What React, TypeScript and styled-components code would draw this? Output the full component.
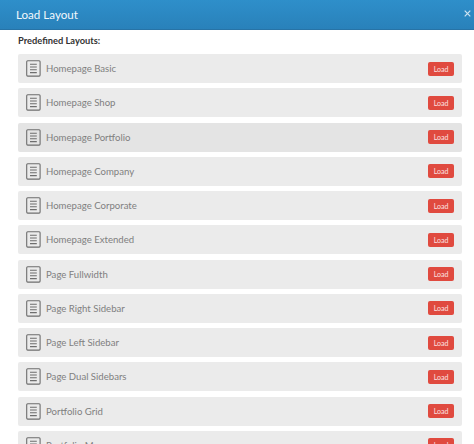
import React from "react";
import styled, { createGlobalStyle } from "styled-components";

const Global = createGlobalStyle`
  html, body { margin: 0; padding: 0; background: #fff; height: 100%; overflow: hidden; }
  body { font-family: Lato, "Open Sans", "Liberation Sans", sans-serif; }
`;

const Modal = styled.div`
  width: 474px;
  height: 444px;
  overflow: hidden;
  display: flex;
  flex-direction: column;
`;

const Header = styled.header`
  flex: none;
  height: 30px;
  box-sizing: border-box;
  padding: 0 3px 0 16px;
  display: flex;
  align-items: center;
  justify-content: space-between;
  background: linear-gradient(#2e8fca, #2981ba);
  border-bottom: 1px solid #2773a6;
`;

const Title = styled.h1`
  margin: 0;
  font-size: 11.6px;
  font-weight: 400;
  color: #f2f8fc;
`;

const Close = styled.button`
  border: 0;
  padding: 0;
  margin-bottom: 3px;
  background: none;
  display: flex;
  color: #cfe4f2;
`;

const Body = styled.main`
  padding: 2px 12px 0 18px;
`;

const SectionTitle = styled.h2`
  margin: 0 0 4px;
  font-size: 9.3px;
  line-height: 18px;
  font-weight: 700;
  color: #333;
`;

const List = styled.ul`
  list-style: none;
  margin: 0;
  padding: 0;
  display: flex;
  flex-direction: column;
  gap: 5.25px;
`;

const Row = styled.li<{ $active?: boolean }>`
  height: 29px;
  box-sizing: border-box;
  padding: 0 8px;
  display: flex;
  align-items: center;
  background: ${(p) => (p.$active ? "#e4e4e4" : "#ebebeb")};
  border-radius: 2px;
`;

const Name = styled.span`
  flex: 1;
  margin-left: 5px;
  font-size: 9.6px;
  color: #808080;
`;

const LoadButton = styled.button`
  width: 26px;
  height: 14px;
  padding: 0;
  border: 0;
  border-radius: 2px;
  background: #e04a3f;
  color: #fbe3e1;
  font-family: inherit;
  font-size: 7px;
  line-height: 14px;
`;

const DocSvg = styled.svg`
  flex: none;
  display: block;
`;

const DocIcon = () => (
  <DocSvg width="15" height="17" viewBox="0 0 15 17" fill="none" stroke="#6e6e6e" strokeWidth="1.1">
    <rect x="0.7" y="0.7" width="13.4" height="15.4" rx="1" />
    <path d="M4 4.2h6.8M4 7h6.8M4 9.8h6.8M4 12.6h6.8" />
  </DocSvg>
);

const layouts = [
  "Homepage Basic",
  "Homepage Shop",
  "Homepage Portfolio",
  "Homepage Company",
  "Homepage Corporate",
  "Homepage Extended",
  "Page Fullwidth",
  "Page Right Sidebar",
  "Page Left Sidebar",
  "Page Dual Sidebars",
  "Portfolio Grid",
  "Portfolio Masonry",
];

export default function App() {
  return (
    <Modal>
      <Global />
      <Header>
        <Title>Load Layout</Title>
        <Close aria-label="Close">
          <svg width="7" height="7" viewBox="0 0 7 7" stroke="currentColor" strokeWidth="1.2">
            <path d="M.7.7l5.6 5.6M6.3.7L.7 6.3" />
          </svg>
        </Close>
      </Header>
      <Body>
        <SectionTitle>Predefined Layouts:</SectionTitle>
        <List>
          {layouts.map((name) => (
            <Row key={name} $active={name === "Homepage Portfolio"}>
              <DocIcon />
              <Name>{name}</Name>
              <LoadButton>Load</LoadButton>
            </Row>
          ))}
        </List>
      </Body>
    </Modal>
  );
}
